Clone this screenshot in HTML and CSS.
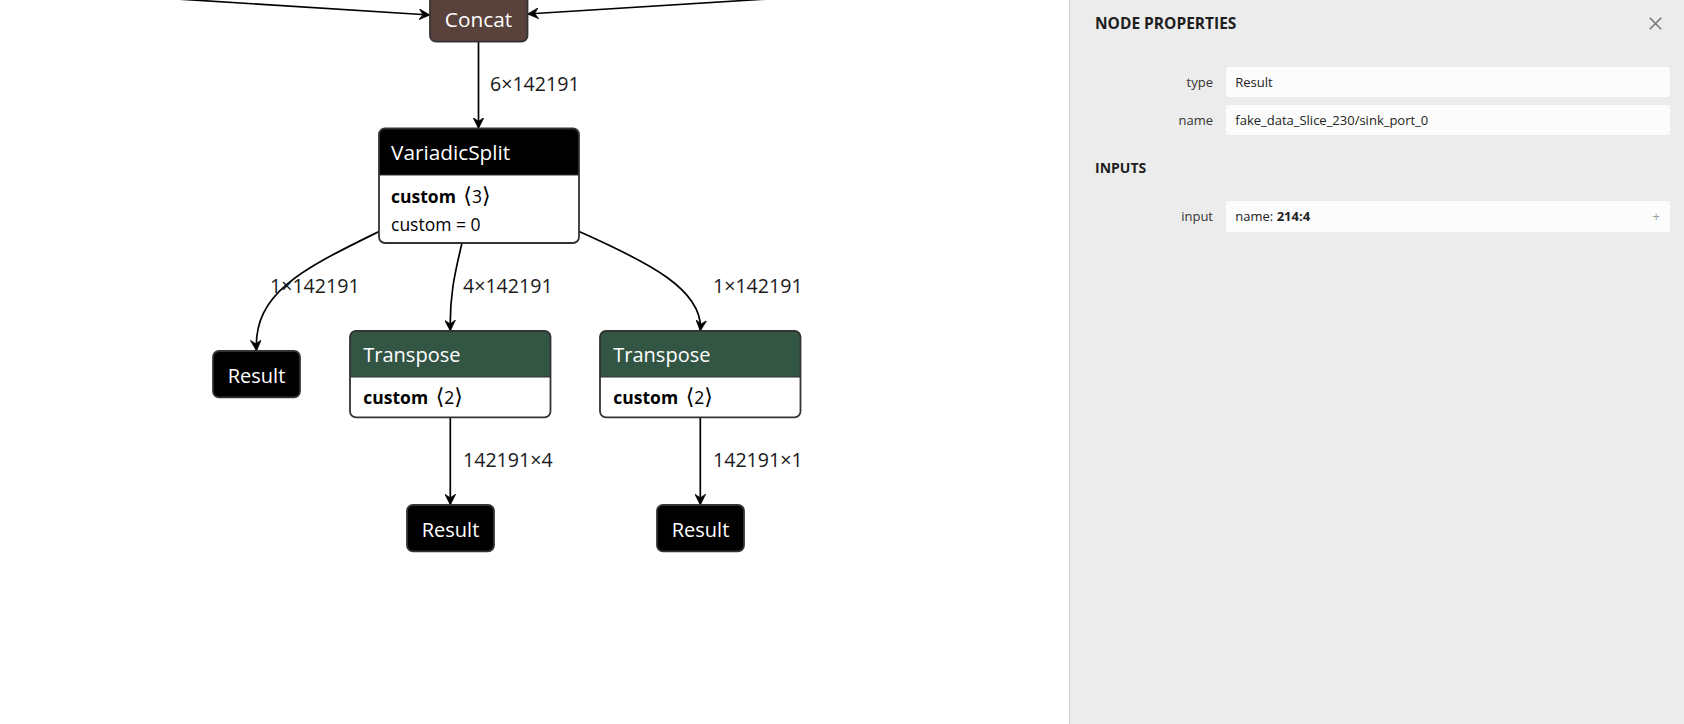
FILE: index.html
```html
<!DOCTYPE html>
<html>
<head>
<meta charset="utf-8">
<title>Graph</title>
<link rel="stylesheet" href="styles.css">
</head>
<body>
<main class="graph">
  <svg class="canvas" width="1069" height="724" viewBox="0 0 1069 724" xmlns="http://www.w3.org/2000/svg">
    <defs>
      <marker id="arrow" markerUnits="userSpaceOnUse" viewBox="0 0 10 10" refX="10" refY="5" markerWidth="11" markerHeight="11" orient="auto">
        <path d="M0,0 L10,5 L0,10 L3.5,5 Z" class="arrowhead"/>
      </marker>
    </defs>

    <!-- edges -->
    <g class="edges">
      <path d="M177,-1 L430,15" marker-end="url(#arrow)"/>
      <path d="M768,-1 L527.5,14" marker-end="url(#arrow)"/>
      <path d="M478.5,41.7 L478.5,128.5" marker-end="url(#arrow)"/>
      <path d="M380,231 C305,268 253,292 256.5,351" marker-end="url(#arrow)"/>
      <path d="M462,243 C454,276 449.5,298 450.3,331" marker-end="url(#arrow)"/>
      <path d="M578,231 C648,262 704,290 700.3,331" marker-end="url(#arrow)"/>
      <path d="M450.3,417.3 L450.3,505" marker-end="url(#arrow)"/>
      <path d="M700.3,417.3 L700.3,505" marker-end="url(#arrow)"/>
    </g>

    <!-- edge labels -->
    <g class="edge-labels">
      <text x="490" y="90.5">6×142191</text>
      <text x="270" y="293">1×142191</text>
      <text x="463" y="293">4×142191</text>
      <text x="713" y="293">1×142191</text>
      <text x="463" y="467">142191×4</text>
      <text x="713" y="467">142191×1</text>
    </g>

    <!-- Concat -->
    <g class="node">
      <rect x="430" y="-12" width="97.5" height="53.7" rx="6" class="hdr-tensor outline"/>
      <text x="478.5" y="27" class="node-title center wide">Concat</text>
    </g>

    <!-- VariadicSplit -->
    <g class="node">
      <rect x="379" y="128.5" width="200" height="114.5" rx="6" class="body"/>
      <path d="M379,175 V134.5 A6,6 0 0 1 385,128.5 H573 A6,6 0 0 1 579,134.5 V175 Z" class="hdr-default"/>
      <line x1="379" y1="175" x2="579" y2="175" class="sep"/>
      <rect x="379" y="128.5" width="200" height="114.5" rx="6" class="outline"/>
      <text x="391" y="160" class="node-title wide">VariadicSplit</text>
      <text x="391" y="202.7" class="attr"><tspan class="attr-name">custom</tspan><tspan class="br" dx="7.5">⟨</tspan>3<tspan class="br">⟩</tspan></text>
      <text x="391" y="230.7" class="attr">custom = 0</text>
    </g>

    <!-- Transpose left -->
    <g class="node">
      <rect x="350" y="331" width="200.5" height="86.3" rx="6" class="body"/>
      <path d="M350,377 V337 A6,6 0 0 1 356,331 H544.5 A6,6 0 0 1 550.5,337 V377 Z" class="hdr-transform"/>
      <line x1="350" y1="377" x2="550.5" y2="377" class="sep"/>
      <rect x="350" y="331" width="200.5" height="86.3" rx="6" class="outline"/>
      <text x="363.3" y="362.3" class="node-title">Transpose</text>
      <text x="363.3" y="404" class="attr"><tspan class="attr-name">custom</tspan><tspan class="br" dx="7.5">⟨</tspan>2<tspan class="br">⟩</tspan></text>
    </g>

    <!-- Transpose right -->
    <g class="node">
      <rect x="600" y="331" width="200.5" height="86.3" rx="6" class="body"/>
      <path d="M600,377 V337 A6,6 0 0 1 606,331 H794.5 A6,6 0 0 1 800.5,337 V377 Z" class="hdr-transform"/>
      <line x1="600" y1="377" x2="800.5" y2="377" class="sep"/>
      <rect x="600" y="331" width="200.5" height="86.3" rx="6" class="outline"/>
      <text x="613.3" y="362.3" class="node-title">Transpose</text>
      <text x="613.3" y="404" class="attr"><tspan class="attr-name">custom</tspan><tspan class="br" dx="7.5">⟨</tspan>2<tspan class="br">⟩</tspan></text>
    </g>

    <!-- Results -->
    <g class="node">
      <rect x="213" y="351" width="87" height="46.3" rx="6" class="hdr-default outline"/>
      <text x="256.5" y="382.7" class="node-title center">Result</text>
    </g>
    <g class="node">
      <rect x="407" y="505" width="87" height="46.3" rx="6" class="hdr-default outline"/>
      <text x="450.5" y="536.7" class="node-title center">Result</text>
    </g>
    <g class="node">
      <rect x="657" y="505" width="87" height="46.3" rx="6" class="hdr-default outline"/>
      <text x="700.5" y="536.7" class="node-title center">Result</text>
    </g>
  </svg>
</main>

<aside class="sidebar">
  <div class="sidebar-header">
    <span class="sidebar-title">NODE PROPERTIES</span>
    <span class="close-btn" aria-label="Close">
      <svg width="13" height="13" viewBox="0 0 13 13" xmlns="http://www.w3.org/2000/svg">
        <path d="M0.8,0.8 L12.2,12.2 M12.2,0.8 L0.8,12.2" class="close-x"/>
      </svg>
    </span>
  </div>

  <div class="props props-first">
    <div class="prop-row">
      <div class="prop-label">type</div>
      <div class="prop-value">Result</div>
    </div>
    <div class="prop-row">
      <div class="prop-label">name</div>
      <div class="prop-value">fake_data_Slice_230/sink_port_0</div>
    </div>
  </div>

  <div class="section-title">INPUTS</div>

  <div class="props props-inputs">
    <div class="prop-row prop-row-tall">
      <div class="prop-label">input</div>
      <div class="prop-value prop-value-expand"><span>name: <b>214:4</b></span><span class="expander">+</span></div>
    </div>
  </div>
</aside>
</body>
</html>
```

FILE: styles.css
```css
html, body {
  margin: 0;
  padding: 0;
}

body {
  display: flex;
  width: 1684px;
  height: 724px;
  overflow: hidden;
  font-family: "Open Sans", "Noto Sans", "DejaVu Sans", sans-serif;
  background: #ffffff;
}

.graph {
  flex: 0 0 1069px;
  height: 724px;
  background: #ffffff;
  overflow: hidden;
}

.canvas {
  display: block;
}

.edges path {
  fill: none;
  stroke: #000000;
  stroke-width: 1.7;
}

.arrowhead {
  fill: #000000;
  stroke: #000000;
  stroke-width: 0.6;
  stroke-linejoin: miter;
}

.edge-labels text {
  font-family: "Open Sans", "Noto Sans", sans-serif;
  font-size: 19.6px;
  fill: #1a1a1a;
}

.node .body {
  fill: #ffffff;
}

.node .outline {
  stroke: #333333;
  stroke-width: 1.8;
}

.node rect.outline:not([class*="hdr"]) {
  fill: none;
}

.hdr-default {
  fill: #000000;
}

.hdr-tensor {
  fill: #59423b;
}

.hdr-transform {
  fill: #335544;
}

.node .sep {
  stroke: #333333;
  stroke-width: 1.2;
}

.node-title {
  font-family: "Open Sans", "Noto Sans", sans-serif;
  font-size: 20px;
  fill: #ffffff;
}

.node-title.wide {
  font-size: 20.8px;
}

.node-title.center {
  text-anchor: middle;
}

.attr {
  font-family: "Open Sans", "Noto Sans", "DejaVu Sans", sans-serif;
  font-size: 17.5px;
  fill: #000000;
}

.attr-name {
  font-weight: 700;
}

.br {
  font-family: "DejaVu Sans", sans-serif;
  font-size: 22px;
  font-weight: 400;
}

/* Sidebar */
.sidebar {
  flex: 1;
  height: 724px;
  box-sizing: border-box;
  background: #ececec;
  border-left: 1px solid #cfcfcf;
  padding: 0 14px 0 25px;
  color: #222222;
}

.sidebar-header {
  height: 46.6px;
  display: flex;
  align-items: center;
  justify-content: space-between;
  padding-right: 8px;
}

.sidebar-title {
  font-size: 15.5px;
  font-weight: 700;
  line-height: 20px;
  color: #1e1e1e;
}

.close-btn {
  display: flex;
  width: 13px;
  height: 13px;
}

.close-x {
  fill: none;
  stroke: #777777;
  stroke-width: 1.6;
}

.props {
  display: flex;
  flex-direction: column;
  gap: 8.6px;
}

.props-first {
  margin-top: 20.7px;
}

.props-inputs {
  margin-top: 22.7px;
}

.prop-row {
  display: grid;
  grid-template-columns: 118px 1fr;
  column-gap: 13px;
  height: 29.4px;
}

.prop-row-tall {
  height: 30.7px;
}

.prop-label {
  text-align: right;
  font-size: 13px;
  line-height: 29.4px;
  padding-top: 1.2px;
  color: #333333;
}

.prop-row-tall .prop-label {
  line-height: 30.7px;
  padding-top: 0;
}

.prop-value {
  background: #fcfcfc;
  border-radius: 3px;
  padding: 1.2px 9px 0 9.3px;
  height: 29.4px;
  box-sizing: border-box;
  font-size: 13px;
  line-height: 28.2px;
  color: #222222;
  white-space: nowrap;
  overflow: hidden;
}

.prop-value-expand {
  display: flex;
  justify-content: space-between;
  height: 30.7px;
  padding-top: 0;
  line-height: 30.7px;
}

.prop-value b {
  font-weight: 700;
}

.expander {
  color: #9a9a9a;
  font-size: 13px;
  padding-right: 1px;
}

.section-title {
  margin-top: 23.6px;
  font-size: 14px;
  font-weight: 700;
  line-height: 20px;
  color: #1e1e1e;
}
```
